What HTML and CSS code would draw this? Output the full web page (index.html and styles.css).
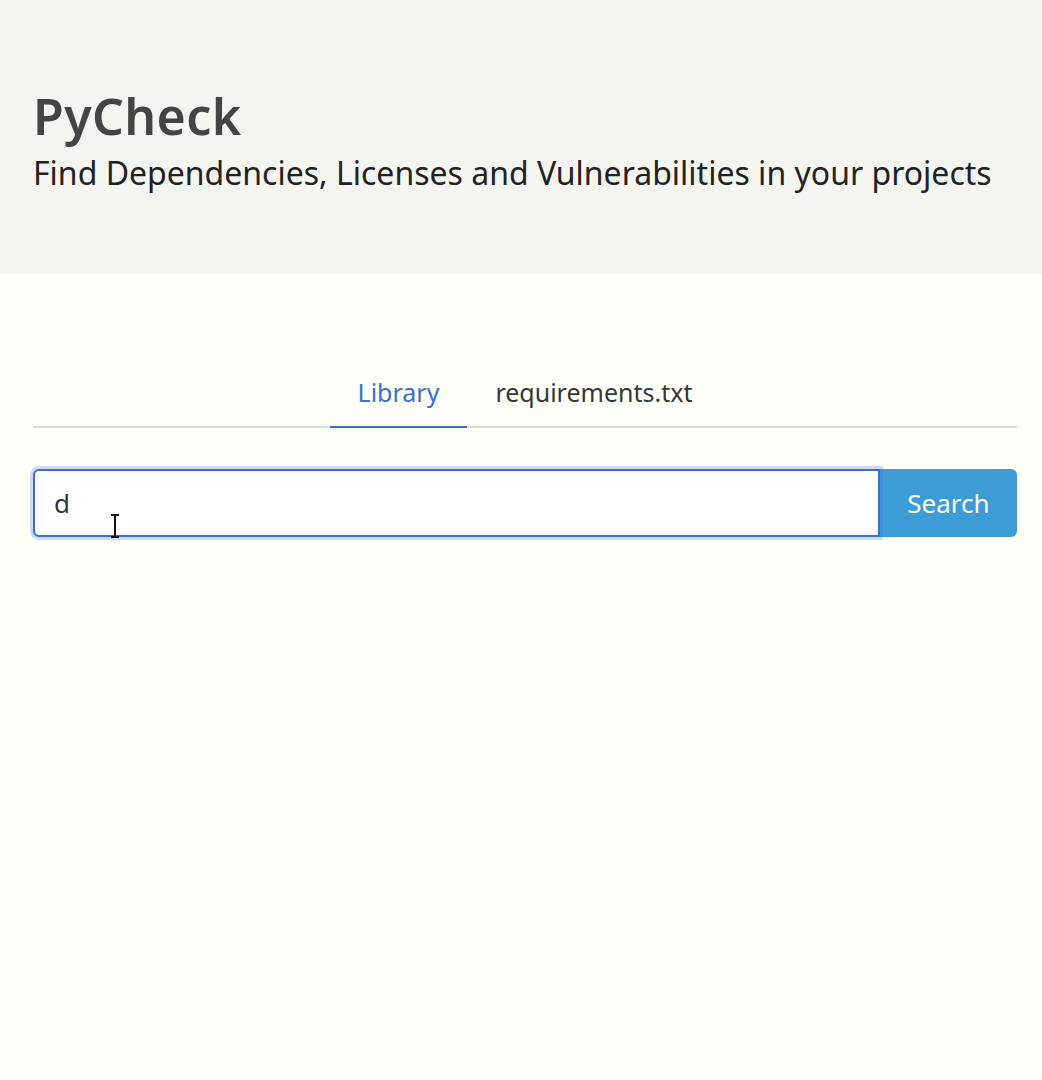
FILE: index.html
```html
<!DOCTYPE html>
<html lang="en">
<head>
<meta charset="utf-8">
<title>PyCheck</title>
<link rel="stylesheet" href="styles.css">
</head>
<body>
<section class="hero">
  <div class="hero-body">
    <h1 class="title">PyCheck</h1>
    <p class="subtitle">Find Dependencies, Licenses and Vulnerabilities in your projects</p>
  </div>
</section>
<main class="content">
  <nav class="tabs">
    <a class="tab is-active">Library</a>
    <a class="tab">requirements.txt</a>
  </nav>
  <form class="search">
    <div class="input-wrap">
      <input class="input" type="text" value="d">
      <svg class="cursor" width="12" height="24" viewBox="0 0 12 24"><path d="M2 1h8M6 1v22M2 23h8" stroke="#111" stroke-width="2" fill="none"/></svg>
    </div>
    <button class="button" type="button">Search</button>
  </form>
</main>
</body>
</html>
```
FILE: styles.css
```css
* { box-sizing: border-box; }
html, body { margin: 0; padding: 0; }
body {
  background: #fffffa;
  font-family: "Noto Sans", "Open Sans", sans-serif;
  color: #4a4a4a;
  min-height: 1080px;
}
.hero {
  background: #f4f4f1;
  height: 274px;
  display: flex;
  align-items: center;
}
.hero-body { padding: 6px 33px 0; }
.title {
  margin: 0;
  font-size: 50px;
  font-weight: 600;
  color: #444;
  line-height: 60px;
  letter-spacing: 0.4px;
}
.subtitle {
  margin: 5px 0 0;
  font-size: 32px;
  color: #222;
  line-height: 44px;
}
.content { padding: 88px 25px 0 33px; }
.tabs {
  display: flex;
  justify-content: center;
  border-bottom: 2px solid #dbdbdb;
}
.tab {
  font-size: 25px;
  padding: 13px 28px 17px;
  margin-bottom: -2px;
  border-bottom: 2px solid transparent;
  color: #363636;
  cursor: pointer;
}
.tab.is-active { color: #3a6fd0; border-bottom-color: #3a6fd0; }
.search { display: flex; margin-top: 41px; }
.input-wrap { position: relative; flex: 1; }
.input {
  width: 100%;
  height: 68px;
  border: 2px solid #3a6fd0;
  border-radius: 6px 0 0 6px;
  box-shadow: 0 0 0 3px rgba(58, 111, 208, 0.25);
  background: #fff;
  font: inherit;
  font-size: 26px;
  color: #363636;
  padding: 0 19px;
  outline: none;
}
.cursor { position: absolute; left: 76px; top: 45px; }
.button {
  width: 137px;
  height: 68px;
  border: none;
  border-radius: 0 6px 6px 0;
  background: #3d9bd6;
  color: #fff;
  font: inherit;
  font-size: 26px;
}
```
